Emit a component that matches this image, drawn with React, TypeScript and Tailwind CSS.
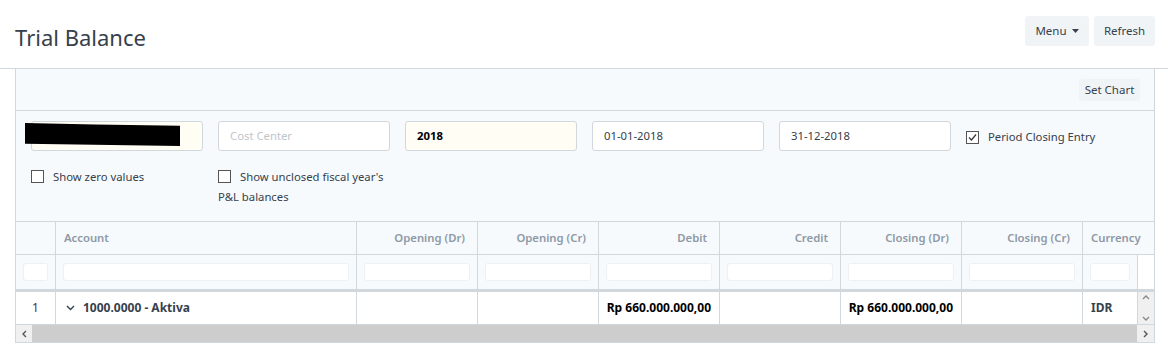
import React from "react";

const numCols = ["Opening (Dr)", "Opening (Cr)", "Debit", "Credit", "Closing (Dr)", "Closing (Cr)"];
const rowValues = ["", "", "Rp 660.000.000,00", "", "Rp 660.000.000,00", ""];

function Box({ checked = false }: { checked?: boolean }) {
  return (
    <span className="inline-flex h-[13px] w-[13px] shrink-0 items-center justify-center border border-[#555] bg-white align-[-2px]">
      {checked && (
        <svg width="9" height="9" viewBox="0 0 9 9">
          <path d="M1 4.5 L3.5 7 L8 1.5" fill="none" stroke="#333" strokeWidth="1.2" />
        </svg>
      )}
    </span>
  );
}

function Field({ value, placeholder, mandatory, bold }: { value?: string; placeholder?: string; mandatory?: boolean; bold?: boolean }) {
  return (
    <div
      className={`flex h-[30px] w-[172px] items-center rounded-[3px] border border-[#d1d8dd] px-[11px] text-[11.3px] ${
        mandatory ? "bg-[#fffdf4]" : "bg-white"
      } ${bold ? "font-bold text-[#000]" : "text-[#36414c]"}`}
    >
      {value ? value : <span className="text-[#c0c6cc]">{placeholder}</span>}
    </div>
  );
}

function FilterInput() {
  return <div className="h-[18px] w-full rounded-[3px] border border-[#eef1f4] bg-white" />;
}

export default function App() {
  return (
    <div className="h-[357px] w-[1168px] overflow-hidden bg-white font-['Noto_Sans',sans-serif] text-[#36414c]">
      <header className="flex h-[69px] items-start justify-between border-b border-[#d1d8dd] pl-[15px] pr-[13px]">
        <h1 className="mt-[22px] text-[22px] leading-[30px]">Trial Balance</h1>
        <div className="mt-4 flex gap-[5px]">
          <button className="flex h-[30px] w-[64px] items-center justify-center gap-[5px] rounded-[3px] bg-[#f0f4f7] text-[11.5px] text-[#36414c]">
            Menu
            <svg width="7" height="4" viewBox="0 0 7 4">
              <path d="M0 0 H7 L3.5 4 Z" fill="#36414c" />
            </svg>
          </button>
          <button className="h-[30px] w-[61px] rounded-[3px] bg-[#f0f4f7] text-[11.5px] text-[#36414c]">Refresh</button>
        </div>
      </header>

      <div className="ml-[15px] w-[1140px] border-x border-b border-[#d1d8dd] bg-[#f7fafc]">
        <div className="flex h-[42px] items-center justify-end border-b border-[#d1d8dd] pr-[14px]">
          <button className="h-[22px] w-[61px] rounded-[3px] bg-[#f0f4f7] text-[11.5px] text-[#36414c]">Set Chart</button>
        </div>

        <div className="h-[110px] pl-[15px] pt-[10px]">
          <div className="flex gap-[15px]">
            <div className="relative">
              <Field mandatory value=" " />
              <div className="absolute left-[-6px] top-[2px] h-[23px] w-[155px] bg-black [clip-path:polygon(0_0,45%_6%,100%_12%,100%_100%,0_90%)]" />
            </div>
            <Field placeholder="Cost Center" />
            <Field mandatory bold value="2018" />
            <Field value="01-01-2018" />
            <Field value="31-12-2018" />
            <div className="flex h-[30px] items-center gap-[9px] pt-[2px] text-[11.3px]">
              <Box checked />
              <span>Period Closing Entry</span>
            </div>
          </div>
          <div className="mt-4 flex gap-[15px] text-[11.3px] leading-[20px]">
            <div className="w-[172px]">
              <Box />
              <span className="ml-[9px]">Show zero values</span>
            </div>
            <div className="w-[172px]">
              <Box />
              <span className="ml-[9px] whitespace-nowrap">Show unclosed fiscal year's</span>
              <br />
              P&amp;L balances
            </div>
          </div>
        </div>

        <div className="text-[11.3px]">
          <div className="flex h-[34px] border-y border-[#d1d8dd] font-semibold text-[#8d99a6]">
            <div className="w-[40px] border-r border-[#d1d8dd]" />
            <div className="flex w-[301px] items-center border-r border-[#d1d8dd] pl-[8px]">Account</div>
            {numCols.map((c) => (
              <div key={c} className="flex w-[121px] items-center justify-end border-r border-[#d1d8dd] pr-[12px]">
                {c}
              </div>
            ))}
            <div className="flex flex-1 items-center pl-[8px]">Currency</div>
          </div>

          <div className="flex h-[37px] border-b-[3px] border-[#d1d8dd]">
            <div className="flex w-[40px] items-center border-r border-[#d1d8dd] px-[7px]">
              <FilterInput />
            </div>
            <div className="flex w-[301px] items-center border-r border-[#d1d8dd] pl-[7px] pr-[7px]">
              <FilterInput />
            </div>
            {numCols.map((c) => (
              <div key={c} className="flex w-[121px] items-center border-r border-[#d1d8dd] px-[7px]">
                <FilterInput />
              </div>
            ))}
            <div className="flex w-[55px] items-center border-r border-[#d1d8dd] px-[7px]">
              <FilterInput />
            </div>
            <div className="flex-1 bg-white" />
          </div>

          <div className="flex h-[33px] border-b border-[#d1d8dd] bg-white text-[12px] font-bold">
            <div className="flex w-[40px] items-center justify-center border-r border-[#d1d8dd] font-normal text-[#5c1f4c]">1</div>
            <div className="flex w-[301px] items-center gap-[8px] border-r border-[#d1d8dd] pl-[10px]">
              <svg width="9" height="6" viewBox="0 0 9 6">
                <path d="M1 1 L4.5 4.5 L8 1" fill="none" stroke="#36414c" strokeWidth="1.4" />
              </svg>
              <span>1000.0000 - Aktiva</span>
            </div>
            {rowValues.map((v, i) => (
              <div key={i} className="flex w-[121px] items-center justify-end border-r border-[#d1d8dd] pr-[8px] text-black">
                {v}
              </div>
            ))}
            <div className="flex w-[55px] items-center border-r border-[#d1d8dd] pl-[8px]">IDR</div>
            <div className="flex flex-1 flex-col items-center justify-between bg-[#f0f0f0] py-[3px] text-[#888]">
              <svg width="8" height="5" viewBox="0 0 8 5">
                <path d="M1 4 L4 1 L7 4" fill="none" stroke="#888" strokeWidth="1.3" />
              </svg>
              <svg width="8" height="5" viewBox="0 0 8 5">
                <path d="M1 1 L4 4 L7 1" fill="none" stroke="#888" strokeWidth="1.3" />
              </svg>
            </div>
          </div>

          <div className="flex h-[17px] bg-[#f0f0f0]">
            <div className="flex w-[16px] items-center justify-center">
              <svg width="5" height="8" viewBox="0 0 5 8">
                <path d="M4 1 L1 4 L4 7" fill="none" stroke="#555" strokeWidth="1.4" />
              </svg>
            </div>
            <div className="flex-1 bg-[#cdcdcd]" />
            <div className="flex w-[17px] items-center justify-center">
              <svg width="5" height="8" viewBox="0 0 5 8">
                <path d="M1 1 L4 4 L1 7" fill="none" stroke="#555" strokeWidth="1.4" />
              </svg>
            </div>
          </div>
        </div>
      </div>
    </div>
  );
}
